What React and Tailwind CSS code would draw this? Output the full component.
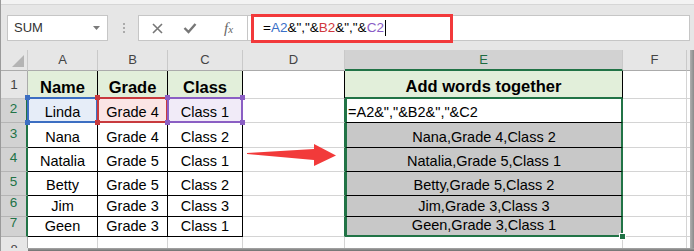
import React from 'react';

const people = [
  ['Linda', 'Grade 4', 'Class 1'],
  ['Nana', 'Grade 4', 'Class 2'],
  ['Natalia', 'Grade 5', 'Class 1'],
  ['Betty', 'Grade 5', 'Class 2'],
  ['Jim', 'Grade 3', 'Class 3'],
  ['Geen', 'Grade 3', 'Class 1'],
];

const colHeader =
  'flex items-center justify-center bg-[#e6e6e6] border-r border-b border-r-[#c9c9c9] border-b-[#ababab] text-[13px] text-[#444]';
const dataText = 'flex items-end justify-center pb-[2px] text-[14.5px] leading-[16px] text-black';
const boldText = 'flex items-end justify-center pb-[2px] text-[16.5px] leading-[18px] font-bold text-black';

// range-finder outline drawn over the referenced cell
function RefBox({ color }) {
  const corner = `absolute w-[5px] h-[5px] ${color.bg}`;
  return (
    <div className={`absolute -top-[2px] -left-px -right-px -bottom-px border-2 z-10 ${color.border}`}>
      <div className={`${corner} -top-[4px] -left-[4px]`} />
      <div className={`${corner} -top-[4px] -right-[4px]`} />
      <div className={`${corner} -bottom-[4px] -left-[4px]`} />
      <div className={`${corner} -bottom-[4px] -right-[4px]`} />
    </div>
  );
}

const refColors = [
  { border: 'border-[#3c6ec2]', bg: 'bg-[#3c6ec2]', fill: 'bg-[#e6edf8]' },
  { border: 'border-[#c83a3e]', bg: 'bg-[#c83a3e]', fill: 'bg-[#fbe5e5]' },
  { border: 'border-[#8b5fc4]', bg: 'bg-[#8b5fc4]', fill: 'bg-[#f1ebf8]' },
];

function Toolbar() {
  return (
    <div className="h-[50px] flex flex-col">
      <div className="h-[5px] bg-[#f3f3f3] border-b border-[#d6d6d6]" />
      <div className="flex items-start pt-[10px] pr-[4px]">
        {/* name box */}
        <div className="ml-[6px] w-[101px] h-[26px] bg-white border border-[#c6c6c6] flex items-center justify-between pl-[6px] pr-[7px]">
          <span className="text-[13px] text-[#333]">SUM</span>
          <svg width="7" height="4" viewBox="0 0 7 4">
            <path d="M0 0 L7 0 L3.5 4 Z" fill="#7a7a7a" />
          </svg>
        </div>
        <div className="ml-[15px] h-[26px] flex flex-col justify-center gap-[2px]">
          <div className="w-[2px] h-[2px] bg-[#ababab]" />
          <div className="w-[2px] h-[2px] bg-[#ababab]" />
          <div className="w-[2px] h-[2px] bg-[#ababab]" />
        </div>
        {/* cancel / enter / fx */}
        <div className="ml-[13px] w-[110px] h-[26px] bg-white border border-[#c6c6c6] flex items-center">
          <svg className="ml-[13px]" width="11" height="11" viewBox="0 0 11 11">
            <path d="M1 1 L10 10 M10 1 L1 10" stroke="#777" strokeWidth="1.6" />
          </svg>
          <svg className="ml-[20px]" width="14" height="12" viewBox="0 0 14 12">
            <path d="M1.5 6 L5.5 10 L12.5 2" stroke="#777" strokeWidth="2.4" fill="none" />
          </svg>
          <span className="ml-[27px] italic font-['Liberation_Serif',serif] text-[15px] text-[#666] leading-none">
            f<span className="text-[11px]">x</span>
          </span>
        </div>
        {/* formula bar */}
        <div className="-ml-px flex-1 h-[26px] bg-white border border-[#c6c6c6] flex items-center pl-[15px] text-[13.5px] text-black">
          <span>=</span>
          <span className="text-[#3a6fc8]">A2</span>
          <span>&amp;","&amp;</span>
          <span className="text-[#d0383d]">B2</span>
          <span>&amp;","&amp;</span>
          <span className="text-[#8a5cc6]">C2</span>
          <span className="ml-px w-px h-[16px] bg-black" />
        </div>
      </div>
    </div>
  );
}

export default function App() {
  return (
    <div className="relative w-[694px] h-[251px] overflow-hidden bg-[#e6e6e6] border-l border-[#9a9a9a] font-['Liberation_Sans',Arial,sans-serif]">
      <Toolbar />

      <div className="flex h-[198px]">
        <div className="grid grid-cols-[27px_70px_70px_75px_102px_278px_64px_3px] grid-rows-[21px_28px_24px_25px_24px_24px_21px_20px_11px] bg-white">
          {/* column headers */}
          <div className="relative bg-[#e6e6e6] border-r border-b border-r-[#c9c9c9] border-b-[#ababab]">
            <svg className="absolute right-[3px] bottom-[3px]" width="12" height="12" viewBox="0 0 12 12">
              <path d="M12 0 L12 12 L0 12 Z" fill="#b4b4b4" />
            </svg>
          </div>
          <div className={colHeader}>A</div>
          <div className={colHeader}>B</div>
          <div className={colHeader}>C</div>
          <div className={colHeader}>D</div>
          <div className="flex items-center justify-center bg-[#d2d2d2] border-r border-b-2 border-r-[#c9c9c9] border-b-[#217346] text-[13px] text-[#1e6b41]">
            E
          </div>
          <div className={colHeader}>F</div>
          <div className="bg-[#e6e6e6] border-b border-[#ababab]" />

          {/* row 1 */}
          <div className="flex items-end justify-center pb-[3px] bg-[#e6e6e6] border-r border-b border-r-[#ababab] border-b-[#c9c9c9] text-[13.5px] text-[#444]">
            1
          </div>
          <div className={`${boldText} bg-[#e2efda] border-r border-b border-black`}>Name</div>
          <div className={`${boldText} bg-[#e2efda] border-r border-b border-black`}>Grade</div>
          <div className={`${boldText} bg-[#e2efda] border-r border-b border-black`}>Class</div>
          <div className="bg-white border-r border-b border-r-black border-b-[#d4d4d4]" />
          <div className={`${boldText} bg-[#e2efda] border-r border-b-2 border-r-black border-b-[#217346]`}>
            Add words together
          </div>
          <div className="bg-white border-r border-b border-[#d4d4d4]" />
          <div className="bg-white border-b border-[#d4d4d4]" />

          {/* rows 2 - 7 */}
          {people.map((p, i) => {
            const first = i === 0;
            const last = i === people.length - 1;
            return (
              <React.Fragment key={p[0]}>
                <div className="flex items-end justify-center pb-[3px] bg-[#d2d2d2] border-r-2 border-b border-r-[#217346] border-b-[#b5b5b5] text-[13.5px] text-[#217346]">
                  {i + 2}
                </div>
                {p.map((v, j) => (
                  <div
                    key={j}
                    className={`${dataText} relative border-r border-b border-black ${first ? refColors[j].fill : 'bg-white'}`}
                  >
                    {v}
                    {first && <RefBox color={refColors[j]} />}
                  </div>
                ))}
                <div className="bg-white border-r border-b border-r-[#217346] border-b-[#d4d4d4]" />
                {first ? (
                  <div className="flex items-end pb-[2px] pl-[1px] text-[14.5px] leading-[16px] text-black bg-white border-x-2 border-b border-x-[#217346] border-b-black">
                    =A2&amp;","&amp;B2&amp;","&amp;C2
                  </div>
                ) : last ? (
                  <div className={`${dataText} relative bg-[#c8c8c8] border-x-2 border-b-2 border-[#217346]`}>
                    {p.join(',')}
                    <div className="absolute -right-[5px] -bottom-[5px] w-[7px] h-[7px] bg-[#217346] border border-white z-10" />
                  </div>
                ) : (
                  <div className={`${dataText} bg-[#c8c8c8] border-x-2 border-b border-x-[#217346] border-b-black`}>
                    {p.join(',')}
                  </div>
                )}
                <div className="bg-white border-r border-b border-[#d4d4d4]" />
                <div className="bg-white border-b border-[#d4d4d4]" />
              </React.Fragment>
            );
          })}

          {/* row 8, cut off by the window edge */}
          <div className="overflow-hidden flex justify-center pt-[5px] bg-[#e6e6e6] border-r border-r-[#ababab] text-[13px] leading-[16px] text-[#444]">
            8
          </div>
          <div className="bg-white border-r border-[#d4d4d4]" />
          <div className="bg-white border-r border-[#d4d4d4]" />
          <div className="bg-white border-r border-[#d4d4d4]" />
          <div className="bg-white border-r border-[#d4d4d4]" />
          <div className="bg-white border-r border-[#d4d4d4]" />
          <div className="bg-white border-r border-[#d4d4d4]" />
          <div className="bg-white" />
        </div>
        <div className="w-[4px] bg-gradient-to-r from-[#b0b0b0] to-[#8a8a8a]" />
      </div>

      <div className="flex h-[3px]">
        <div className="w-[27px] bg-[#e6e6e6]" />
        <div className="flex-1 bg-gradient-to-b from-[#a8a8a8] to-[#707070]" />
      </div>

      {/* annotations */}
      <div className="absolute left-[250px] top-[14px] w-[202px] h-[29px] border-[3px] border-[#f2393b]" />
      <svg className="absolute left-[246px] top-[144px]" width="90" height="23" viewBox="0 0 90 23">
        <path d="M0 9 L67 5 L67 0 L89 11.5 L67 22 L67 16 L0 10 Z" fill="#f23a3a" />
      </svg>
    </div>
  );
}
